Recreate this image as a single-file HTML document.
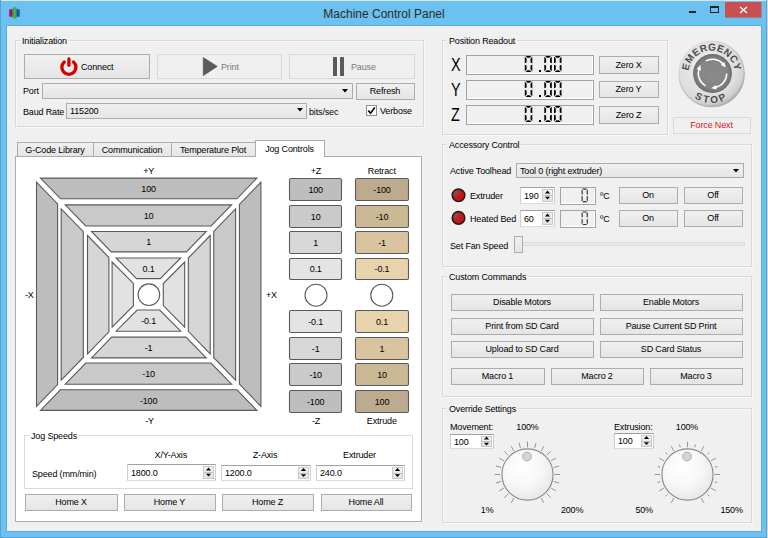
<!DOCTYPE html><html><head><meta charset="utf-8"><style>
*{margin:0;padding:0;box-sizing:border-box}
html,body{width:768px;height:538px;overflow:hidden;background:#6bc1ef;font-family:"Liberation Sans", sans-serif;color:#000}
.t{position:absolute;line-height:0;white-space:nowrap}
.t::before{content:"";}
.btn{position:absolute;border:1px solid #acacac;background:linear-gradient(#f0f0f0,#e5e5e5)}
.btn.dis{border-color:#d9d9d9;background:#f0f0f0}
.grp{position:absolute;border:1px solid #d9d9d9;box-shadow:inset 1px 1px 0 rgba(255,255,255,.55), 1px 1px 0 rgba(255,255,255,.55)}
.gt{background:#f0f0f0}
</style></head><body>
<div style="position:absolute;left:0px;top:0px;width:768px;height:1px;background:#e3e3e3"></div>
<div style="position:absolute;left:0px;top:0px;width:1px;height:538px;background:#5aa0cf"></div>
<div style="position:absolute;left:0px;top:537px;width:768px;height:1px;background:#5aa0cf"></div>
<div style="position:absolute;left:766px;top:0px;width:1px;height:538px;background:#5aa0cf"></div>
<div style="position:absolute;left:767px;top:0px;width:1px;height:538px;background:#d8d8d8"></div>
<div style="position:absolute;left:6px;top:25px;width:756px;height:507px;background:#5eabdc"></div>
<div style="position:absolute;left:7px;top:26px;width:754px;height:505px;background:#f0f0f0"></div>
<svg style="position:absolute;left:0;top:0" width="768" height="25"><defs><linearGradient id="ic1" x1="0" x2="1"><stop offset="0" stop-color="#e0107a"/><stop offset="1" stop-color="#701090"/></linearGradient><linearGradient id="ic3" x1="0" x2="1"><stop offset="0" stop-color="#1030b0"/><stop offset="1" stop-color="#2080e0"/></linearGradient><linearGradient id="ic2" x1="0" x2="1"><stop offset="0" stop-color="#20902a"/><stop offset="0.5" stop-color="#50c040"/><stop offset="1" stop-color="#208a2a"/></linearGradient></defs><rect x="9" y="9" width="3.6" height="8" rx="1.8" fill="url(#ic1)"/><rect x="16.6" y="9" width="3.5" height="8" rx="1.75" fill="url(#ic3)"/><rect x="12.5" y="7" width="4.3" height="12" rx="2.15" fill="url(#ic2)"/><rect x="689" y="11" width="7" height="2" fill="#222"/><rect x="710.5" y="6.5" width="8" height="6" fill="none" stroke="#222" stroke-width="1"/><rect x="710" y="6" width="9" height="2" fill="#222"/><rect x="725" y="2" width="36.5" height="15.6" fill="#c75050"/><path d="M740 7 L747 13 M747 7 L740 13" stroke="#fff" stroke-width="1.4"/></svg>
<div class="t" style="left:284px;width:200px;text-align:center;top:14.2px;font-size:12px;letter-spacing:0px;transform:scaleX(1);transform-origin:100px 0;color:#2b2b2b">Machine Control Panel</div>
<div class="grp" style="left:15px;top:40px;width:409px;height:87px;"></div>
<div class="t" style="left:20px;top:41px;font-size:9px;letter-spacing:-0.15px"><span class="gt" style="padding:0 2px">Initialization</span></div>
<div class="btn" style="left:24px;top:54px;width:126px;height:25px;"></div>
<svg style="position:absolute;left:0;top:0" width="768" height="100"><path d="M64.3 62.0 A7.05 7.05 0 1 0 73.5 62.0" fill="none" stroke="#d00000" stroke-width="3.3" stroke-linecap="round"/><path d="M68.9 58.9 L68.9 65.3" stroke="#d00000" stroke-width="3.3" stroke-linecap="round"/></svg>
<div class="t" style="left:81px;top:66.5px;font-size:9px;letter-spacing:-0.15px;transform:scaleX(1);transform-origin:0 0;">Connect</div>
<div class="btn dis" style="left:157px;top:54px;width:125px;height:25px;"></div>
<svg style="position:absolute;left:200px;top:55px" width="20" height="23"><path d="M3.3 2.6 L17.2 11.4 L3.3 20.6 Z" fill="#5b5b5b" stroke="#5b5b5b" stroke-width="0.8" stroke-linejoin="round"/></svg>
<div class="t" style="left:221px;top:66.5px;font-size:9px;letter-spacing:-0.15px;transform:scaleX(1);transform-origin:0 0;color:#7a7a7a">Print</div>
<div class="btn dis" style="left:289px;top:54px;width:126px;height:25px;"></div>
<div style="position:absolute;left:333px;top:57px;width:4px;height:19px;background:#5b5b5b;border-radius:0.5px"></div>
<div style="position:absolute;left:340px;top:57px;width:4px;height:19px;background:#5b5b5b;border-radius:0.5px"></div>
<div class="t" style="left:351px;top:66.5px;font-size:9px;letter-spacing:-0.15px;transform:scaleX(1);transform-origin:0 0;color:#7a7a7a">Pause</div>
<div class="t" style="left:23px;top:91px;font-size:9px;letter-spacing:-0.15px;transform:scaleX(1);transform-origin:0 0;">Port</div>
<div class="btn" style="left:42px;top:83px;width:311px;height:16px;"></div>
<svg style="position:absolute;left:340px;top:87px" width="10" height="8"><path d="M2 2 L8 2 L5 5.5 Z" fill="#000"/></svg>
<div class="btn" style="left:356px;top:83px;width:59px;height:17px;"></div>
<div class="t" style="left:285.0px;width:200px;text-align:center;top:91.0px;font-size:9px;letter-spacing:-0.15px;transform:scaleX(1);transform-origin:100px 0;">Refresh</div>
<div class="t" style="left:23px;top:111.5px;font-size:9px;letter-spacing:-0.15px;transform:scaleX(1);transform-origin:0 0;">Baud Rate</div>
<div class="btn" style="left:66px;top:103px;width:241px;height:16px;"></div>
<div class="t" style="left:70px;top:111px;font-size:9px;letter-spacing:-0.15px;transform:scaleX(1);transform-origin:0 0;">115200</div>
<svg style="position:absolute;left:295px;top:106px" width="10" height="8"><path d="M2 2 L8 2 L5 5.5 Z" fill="#000"/></svg>
<div class="t" style="left:309px;top:111.5px;font-size:9px;letter-spacing:-0.15px;transform:scaleX(1);transform-origin:0 0;">bits/sec</div>
<div style="position:absolute;left:366px;top:105px;width:11px;height:11px;border:1px solid #8f8f8f;background:#fff"></div>
<svg style="position:absolute;left:366px;top:105px" width="11" height="11"><path d="M2.3 5.6 L4.6 8.2 L8.8 2.4" fill="none" stroke="#000" stroke-width="1.6"/></svg>
<div class="t" style="left:380px;top:110.5px;font-size:9px;letter-spacing:-0.15px;transform:scaleX(1);transform-origin:0 0;">Verbose</div>
<div class="grp" style="left:442px;top:40px;width:226px;height:95px;"></div>
<div class="t" style="left:447px;top:41px;font-size:9px;letter-spacing:-0.15px"><span class="gt" style="padding:0 2px">Position Readout</span></div>
<div class="t" style="left:450.5px;top:64.5px;font-size:18px;letter-spacing:0px;transform:scaleX(0.8);transform-origin:0 0;">X</div>
<div style="position:absolute;left:466px;top:55px;width:128px;height:20px;border:1px solid #a3a3a3;box-shadow:inset -1px -1px 0 #fff;background:#f0f0f0"></div>
<div class="btn" style="left:599px;top:56px;width:60px;height:18px;"></div>
<div class="t" style="left:528.5px;width:200px;text-align:center;top:64.5px;font-size:9px;letter-spacing:-0.15px;transform:scaleX(1);transform-origin:100px 0;">Zero X</div>
<div class="t" style="left:450.5px;top:89.5px;font-size:18px;letter-spacing:0px;transform:scaleX(0.8);transform-origin:0 0;">Y</div>
<div style="position:absolute;left:466px;top:80px;width:128px;height:20px;border:1px solid #a3a3a3;box-shadow:inset -1px -1px 0 #fff;background:#f0f0f0"></div>
<div class="btn" style="left:599px;top:81px;width:60px;height:17px;"></div>
<div class="t" style="left:528.5px;width:200px;text-align:center;top:89.0px;font-size:9px;letter-spacing:-0.15px;transform:scaleX(1);transform-origin:100px 0;">Zero Y</div>
<div class="t" style="left:450.5px;top:114.5px;font-size:18px;letter-spacing:0px;transform:scaleX(0.8);transform-origin:0 0;">Z</div>
<div style="position:absolute;left:466px;top:105px;width:128px;height:20px;border:1px solid #a3a3a3;box-shadow:inset -1px -1px 0 #fff;background:#f0f0f0"></div>
<div class="btn" style="left:599px;top:106px;width:60px;height:18px;"></div>
<div class="t" style="left:528.5px;width:200px;text-align:center;top:114.5px;font-size:9px;letter-spacing:-0.15px;transform:scaleX(1);transform-origin:100px 0;">Zero Z</div>
<svg style="position:absolute;left:0;top:0" width="768" height="538"><g fill="#000"><path d="M525.5999999999999 56 L531.5 56 L529.7 57.8 L527.3999999999999 57.8 Z"/><path d="M525.5999999999999 72 L531.5 72 L529.7 70.2 L527.3999999999999 70.2 Z"/><path d="M524.8 56.8 L526.5999999999999 58.599999999999994 L526.5999999999999 62.6 L524.8 63.2 Z"/><path d="M524.8 71.2 L526.5999999999999 69.4 L526.5999999999999 65.4 L524.8 64.8 Z"/><path d="M532.3 56.8 L530.5 58.599999999999994 L530.5 62.6 L532.3 63.2 Z"/><path d="M532.3 71.2 L530.5 69.4 L530.5 65.4 L532.3 64.8 Z"/><path d="M545.0999999999999 56 L551.0 56 L549.2 57.8 L546.8999999999999 57.8 Z"/><path d="M545.0999999999999 72 L551.0 72 L549.2 70.2 L546.8999999999999 70.2 Z"/><path d="M544.3 56.8 L546.0999999999999 58.599999999999994 L546.0999999999999 62.6 L544.3 63.2 Z"/><path d="M544.3 71.2 L546.0999999999999 69.4 L546.0999999999999 65.4 L544.3 64.8 Z"/><path d="M551.8 56.8 L550.0 58.599999999999994 L550.0 62.6 L551.8 63.2 Z"/><path d="M551.8 71.2 L550.0 69.4 L550.0 65.4 L551.8 64.8 Z"/><path d="M554.8 56 L560.7 56 L558.9000000000001 57.8 L556.5999999999999 57.8 Z"/><path d="M554.8 72 L560.7 72 L558.9000000000001 70.2 L556.5999999999999 70.2 Z"/><path d="M554.0 56.8 L555.8 58.599999999999994 L555.8 62.6 L554.0 63.2 Z"/><path d="M554.0 71.2 L555.8 69.4 L555.8 65.4 L554.0 64.8 Z"/><path d="M561.5 56.8 L559.7 58.599999999999994 L559.7 62.6 L561.5 63.2 Z"/><path d="M561.5 71.2 L559.7 69.4 L559.7 65.4 L561.5 64.8 Z"/><rect x="539" y="70" width="2" height="2"/><path d="M525.5999999999999 81 L531.5 81 L529.7 82.8 L527.3999999999999 82.8 Z"/><path d="M525.5999999999999 97 L531.5 97 L529.7 95.2 L527.3999999999999 95.2 Z"/><path d="M524.8 81.8 L526.5999999999999 83.6 L526.5999999999999 87.6 L524.8 88.2 Z"/><path d="M524.8 96.2 L526.5999999999999 94.4 L526.5999999999999 90.4 L524.8 89.8 Z"/><path d="M532.3 81.8 L530.5 83.6 L530.5 87.6 L532.3 88.2 Z"/><path d="M532.3 96.2 L530.5 94.4 L530.5 90.4 L532.3 89.8 Z"/><path d="M545.0999999999999 81 L551.0 81 L549.2 82.8 L546.8999999999999 82.8 Z"/><path d="M545.0999999999999 97 L551.0 97 L549.2 95.2 L546.8999999999999 95.2 Z"/><path d="M544.3 81.8 L546.0999999999999 83.6 L546.0999999999999 87.6 L544.3 88.2 Z"/><path d="M544.3 96.2 L546.0999999999999 94.4 L546.0999999999999 90.4 L544.3 89.8 Z"/><path d="M551.8 81.8 L550.0 83.6 L550.0 87.6 L551.8 88.2 Z"/><path d="M551.8 96.2 L550.0 94.4 L550.0 90.4 L551.8 89.8 Z"/><path d="M554.8 81 L560.7 81 L558.9000000000001 82.8 L556.5999999999999 82.8 Z"/><path d="M554.8 97 L560.7 97 L558.9000000000001 95.2 L556.5999999999999 95.2 Z"/><path d="M554.0 81.8 L555.8 83.6 L555.8 87.6 L554.0 88.2 Z"/><path d="M554.0 96.2 L555.8 94.4 L555.8 90.4 L554.0 89.8 Z"/><path d="M561.5 81.8 L559.7 83.6 L559.7 87.6 L561.5 88.2 Z"/><path d="M561.5 96.2 L559.7 94.4 L559.7 90.4 L561.5 89.8 Z"/><rect x="539" y="95" width="2" height="2"/><path d="M525.5999999999999 106 L531.5 106 L529.7 107.8 L527.3999999999999 107.8 Z"/><path d="M525.5999999999999 122 L531.5 122 L529.7 120.2 L527.3999999999999 120.2 Z"/><path d="M524.8 106.8 L526.5999999999999 108.6 L526.5999999999999 112.6 L524.8 113.2 Z"/><path d="M524.8 121.2 L526.5999999999999 119.4 L526.5999999999999 115.4 L524.8 114.8 Z"/><path d="M532.3 106.8 L530.5 108.6 L530.5 112.6 L532.3 113.2 Z"/><path d="M532.3 121.2 L530.5 119.4 L530.5 115.4 L532.3 114.8 Z"/><path d="M545.0999999999999 106 L551.0 106 L549.2 107.8 L546.8999999999999 107.8 Z"/><path d="M545.0999999999999 122 L551.0 122 L549.2 120.2 L546.8999999999999 120.2 Z"/><path d="M544.3 106.8 L546.0999999999999 108.6 L546.0999999999999 112.6 L544.3 113.2 Z"/><path d="M544.3 121.2 L546.0999999999999 119.4 L546.0999999999999 115.4 L544.3 114.8 Z"/><path d="M551.8 106.8 L550.0 108.6 L550.0 112.6 L551.8 113.2 Z"/><path d="M551.8 121.2 L550.0 119.4 L550.0 115.4 L551.8 114.8 Z"/><path d="M554.8 106 L560.7 106 L558.9000000000001 107.8 L556.5999999999999 107.8 Z"/><path d="M554.8 122 L560.7 122 L558.9000000000001 120.2 L556.5999999999999 120.2 Z"/><path d="M554.0 106.8 L555.8 108.6 L555.8 112.6 L554.0 113.2 Z"/><path d="M554.0 121.2 L555.8 119.4 L555.8 115.4 L554.0 114.8 Z"/><path d="M561.5 106.8 L559.7 108.6 L559.7 112.6 L561.5 113.2 Z"/><path d="M561.5 121.2 L559.7 119.4 L559.7 115.4 L561.5 114.8 Z"/><rect x="539" y="120" width="2" height="2"/></g></svg>
<svg style="position:absolute;left:672px;top:34px" width="80" height="80" viewBox="0 0 80 80">
<defs>
<radialGradient id="eo" cx="0.42" cy="0.38" r="0.62"><stop offset="0" stop-color="#ececec"/><stop offset="0.75" stop-color="#dedede"/><stop offset="0.93" stop-color="#d2d2d2"/><stop offset="1" stop-color="#bdbdbd"/></radialGradient>
<radialGradient id="ei" cx="0.5" cy="0.5" r="0.5"><stop offset="0" stop-color="#8a8a8a"/><stop offset="0.75" stop-color="#858585"/><stop offset="0.92" stop-color="#767676"/><stop offset="1" stop-color="#6a6a6a"/></radialGradient>
<path id="arcT" d="M16.300000000000022 39.900000000000006 A23.3 23.3 0 0 1 62.90000000000002 39.900000000000006"/>
<path id="arcB" d="M10.300000000000022 39.900000000000006 A29.3 29.3 0 0 0 68.90000000000002 39.900000000000006"/>
</defs>
<linearGradient id="erim" x1="0.2" y1="0.1" x2="0.8" y2="0.95"><stop offset="0" stop-color="#e0e0e0"/><stop offset="1" stop-color="#a8a8a8"/></linearGradient>
<circle cx="39.60000000000002" cy="39.900000000000006" r="32.6" fill="url(#eo)" stroke="url(#erim)" stroke-width="1.4"/>
<circle cx="40.5" cy="39.5" r="19.4" fill="url(#ei)"/>
<path d="M33.83 26.96 A14.2 14.2 0 0 1 51.38 30.37" fill="none" stroke="#fff" stroke-width="1.5"/><path d="M53.81 33.27 L52.34 27.92 L48.80 30.89 Z" fill="#fff"/><path d="M33.40 51.80 A14.2 14.2 0 0 1 27.16 34.64" fill="none" stroke="#fff" stroke-width="1.5"/><path d="M28.45 31.09 L24.55 35.04 L28.90 36.62 Z" fill="#fff"/><path d="M54.70 39.50 A14.2 14.2 0 0 1 42.97 53.48" fill="none" stroke="#fff" stroke-width="1.5"/><path d="M39.24 54.14 L44.61 55.54 L43.81 50.99 Z" fill="#fff"/><text font-family="Liberation Sans" font-weight="bold" font-size="10" fill="#4c4c4c" letter-spacing="0.25"><textPath href="#arcT" startOffset="50%" text-anchor="middle">EMERGENCY</textPath></text>
<text font-family="Liberation Sans" font-weight="bold" font-size="10" fill="#4c4c4c" letter-spacing="2.4"><textPath href="#arcB" startOffset="50%" text-anchor="middle">STOP</textPath></text>
</svg>
<div class="btn dis" style="left:673px;top:117px;width:78px;height:17px;"></div>
<div class="t" style="left:611.5px;width:200px;text-align:center;top:125.0px;font-size:9px;letter-spacing:-0.15px;transform:scaleX(1);transform-origin:100px 0;color:#dc1028">Force Next</div>
<div style="position:absolute;left:15px;top:156px;width:407px;height:366px;border:1px solid #acacac;background:#fff"></div>
<div style="position:absolute;left:17px;top:142px;width:77px;height:15px;border:1px solid #acacac;background:linear-gradient(#f0f0f0,#e5e5e5)"></div>
<div class="t" style="left:-45.0px;width:200px;text-align:center;top:149.5px;font-size:9px;letter-spacing:-0.15px;transform:scaleX(1);transform-origin:100px 0;">G-Code Library</div>
<div style="position:absolute;left:93px;top:142px;width:79px;height:15px;border:1px solid #acacac;background:linear-gradient(#f0f0f0,#e5e5e5)"></div>
<div class="t" style="left:32.0px;width:200px;text-align:center;top:149.5px;font-size:9px;letter-spacing:-0.15px;transform:scaleX(1);transform-origin:100px 0;">Communication</div>
<div style="position:absolute;left:171px;top:142px;width:85px;height:15px;border:1px solid #acacac;background:linear-gradient(#f0f0f0,#e5e5e5)"></div>
<div class="t" style="left:113.0px;width:200px;text-align:center;top:149.5px;font-size:9px;letter-spacing:-0.15px;transform:scaleX(1);transform-origin:100px 0;">Temperature Plot</div>
<div style="position:absolute;left:255px;top:140px;width:70px;height:17px;border:1px solid #acacac;border-bottom:none;background:#fff"></div>
<div class="t" style="left:189.5px;width:200px;text-align:center;top:149px;font-size:9px;letter-spacing:-0.15px;transform:scaleX(1);transform-origin:100px 0;">Jog Controls</div>
<svg style="position:absolute;left:0;top:0" width="768" height="538"><polygon points="40.50,178.10 256.90,178.10 236.90,198.80 60.50,198.80" fill="#bdbdbd" stroke="#5a5a5a" stroke-width="1.1" stroke-linejoin="miter"/><polygon points="40.50,410.40 256.90,410.40 237.00,389.80 60.40,389.80" fill="#bdbdbd" stroke="#5a5a5a" stroke-width="1.1" stroke-linejoin="miter"/><polygon points="36.50,182.10 57.60,203.94 57.60,384.56 36.50,406.40" fill="#bdbdbd" stroke="#5a5a5a" stroke-width="1.1" stroke-linejoin="miter"/><polygon points="260.90,182.10 239.40,204.36 239.40,384.14 260.90,406.40" fill="#bdbdbd" stroke="#5a5a5a" stroke-width="1.1" stroke-linejoin="miter"/><polygon points="65.20,204.90 231.60,204.90 211.08,226.00 85.72,226.00" fill="#c9c9c9" stroke="#5a5a5a" stroke-width="1.1" stroke-linejoin="miter"/><polygon points="65.20,384.20 231.60,384.20 210.98,363.00 85.82,363.00" fill="#c9c9c9" stroke="#5a5a5a" stroke-width="1.1" stroke-linejoin="miter"/><polygon points="61.20,208.90 83.30,231.62 83.30,357.48 61.20,380.20" fill="#c9c9c9" stroke="#5a5a5a" stroke-width="1.1" stroke-linejoin="miter"/><polygon points="235.60,208.90 213.75,231.36 213.75,357.74 235.60,380.20" fill="#c9c9c9" stroke="#5a5a5a" stroke-width="1.1" stroke-linejoin="miter"/><polygon points="91.50,231.50 206.20,231.50 186.40,251.90 111.30,251.90" fill="#d6d6d6" stroke="#5a5a5a" stroke-width="1.1" stroke-linejoin="miter"/><polygon points="91.50,357.90 206.20,357.90 186.01,337.10 111.69,337.10" fill="#d6d6d6" stroke="#5a5a5a" stroke-width="1.1" stroke-linejoin="miter"/><polygon points="87.50,235.50 108.90,257.55 108.90,331.85 87.50,353.90" fill="#d6d6d6" stroke="#5a5a5a" stroke-width="1.1" stroke-linejoin="miter"/><polygon points="210.20,235.50 188.30,258.06 188.30,331.34 210.20,353.90" fill="#d6d6d6" stroke="#5a5a5a" stroke-width="1.1" stroke-linejoin="miter"/><polygon points="116.10,258.00 180.70,258.00 160.27,278.60 136.53,278.60" fill="#e2e2e2" stroke="#5a5a5a" stroke-width="1.1" stroke-linejoin="miter"/><polygon points="116.10,331.20 180.70,331.20 159.67,310.00 137.13,310.00" fill="#e2e2e2" stroke="#5a5a5a" stroke-width="1.1" stroke-linejoin="miter"/><polygon points="112.10,262.00 133.40,283.48 133.40,305.72 112.10,327.20" fill="#e2e2e2" stroke="#5a5a5a" stroke-width="1.1" stroke-linejoin="miter"/><polygon points="184.70,262.00 163.30,283.58 163.30,305.62 184.70,327.20" fill="#e2e2e2" stroke="#5a5a5a" stroke-width="1.1" stroke-linejoin="miter"/><circle cx="148.9" cy="294.65" r="10.8" fill="#fff" stroke="#5a5a5a" stroke-width="1.1"/><rect x="289.5" y="178.5" width="52" height="22" rx="1.5" fill="#bebebe" stroke="#5a5a5a" stroke-width="1.1"/><rect x="355.5" y="178.5" width="53" height="22" rx="1.5" fill="#bcab8f" stroke="#5a5a5a" stroke-width="1.1"/><rect x="289.5" y="205.5" width="52" height="22" rx="1.5" fill="#cacaca" stroke="#5a5a5a" stroke-width="1.1"/><rect x="355.5" y="205.5" width="53" height="22" rx="1.5" fill="#cbb895" stroke="#5a5a5a" stroke-width="1.1"/><rect x="289.5" y="231.5" width="52" height="22" rx="1.5" fill="#d7d7d7" stroke="#5a5a5a" stroke-width="1.1"/><rect x="355.5" y="231.5" width="53" height="22" rx="1.5" fill="#dac49f" stroke="#5a5a5a" stroke-width="1.1"/><rect x="289.5" y="258.5" width="52" height="21" rx="1.5" fill="#e4e4e4" stroke="#5a5a5a" stroke-width="1.1"/><rect x="355.5" y="258.5" width="53" height="21" rx="1.5" fill="#e8d3ad" stroke="#5a5a5a" stroke-width="1.1"/><rect x="289.5" y="310.5" width="52" height="22" rx="1.5" fill="#e4e4e4" stroke="#5a5a5a" stroke-width="1.1"/><rect x="355.5" y="310.5" width="53" height="22" rx="1.5" fill="#e8d3ad" stroke="#5a5a5a" stroke-width="1.1"/><rect x="289.5" y="337.5" width="52" height="22" rx="1.5" fill="#d7d7d7" stroke="#5a5a5a" stroke-width="1.1"/><rect x="355.5" y="337.5" width="53" height="22" rx="1.5" fill="#dac49f" stroke="#5a5a5a" stroke-width="1.1"/><rect x="289.5" y="363.5" width="52" height="22" rx="1.5" fill="#cacaca" stroke="#5a5a5a" stroke-width="1.1"/><rect x="355.5" y="363.5" width="53" height="22" rx="1.5" fill="#cbb895" stroke="#5a5a5a" stroke-width="1.1"/><rect x="289.5" y="390.5" width="52" height="22" rx="1.5" fill="#bebebe" stroke="#5a5a5a" stroke-width="1.1"/><rect x="355.5" y="390.5" width="53" height="22" rx="1.5" fill="#bcab8f" stroke="#5a5a5a" stroke-width="1.1"/><circle cx="316" cy="295.2" r="11" fill="#fff" stroke="#5a5a5a" stroke-width="1.1"/><circle cx="381.8" cy="295.2" r="11" fill="#fff" stroke="#5a5a5a" stroke-width="1.1"/></svg>
<div class="t" style="left:48.69999999999999px;width:200px;text-align:center;top:170.8px;font-size:9px;letter-spacing:-0.15px;transform:scaleX(1);transform-origin:100px 0;">+Y</div>
<div class="t" style="left:49.5px;width:200px;text-align:center;top:420.5px;font-size:9px;letter-spacing:-0.15px;transform:scaleX(1);transform-origin:100px 0;">-Y</div>
<div class="t" style="left:25px;top:295.3px;font-size:9px;letter-spacing:-0.15px;transform:scaleX(1);transform-origin:0 0;">-X</div>
<div class="t" style="left:266px;top:295.3px;font-size:9px;letter-spacing:-0.15px;transform:scaleX(1);transform-origin:0 0;">+X</div>
<div class="t" style="left:48.599999999999994px;width:200px;text-align:center;top:189.2px;font-size:9px;letter-spacing:-0.15px;transform:scaleX(1);transform-origin:100px 0;">100</div>
<div class="t" style="left:48.599999999999994px;width:200px;text-align:center;top:215.9px;font-size:9px;letter-spacing:-0.15px;transform:scaleX(1);transform-origin:100px 0;">10</div>
<div class="t" style="left:48.599999999999994px;width:200px;text-align:center;top:242px;font-size:9px;letter-spacing:-0.15px;transform:scaleX(1);transform-origin:100px 0;">1</div>
<div class="t" style="left:48.599999999999994px;width:200px;text-align:center;top:268.6px;font-size:9px;letter-spacing:-0.15px;transform:scaleX(1);transform-origin:100px 0;">0.1</div>
<div class="t" style="left:48.599999999999994px;width:200px;text-align:center;top:321.2px;font-size:9px;letter-spacing:-0.15px;transform:scaleX(1);transform-origin:100px 0;">-0.1</div>
<div class="t" style="left:48.599999999999994px;width:200px;text-align:center;top:347.8px;font-size:9px;letter-spacing:-0.15px;transform:scaleX(1);transform-origin:100px 0;">-1</div>
<div class="t" style="left:48.599999999999994px;width:200px;text-align:center;top:374.2px;font-size:9px;letter-spacing:-0.15px;transform:scaleX(1);transform-origin:100px 0;">-10</div>
<div class="t" style="left:48.599999999999994px;width:200px;text-align:center;top:400.6px;font-size:9px;letter-spacing:-0.15px;transform:scaleX(1);transform-origin:100px 0;">-100</div>
<div class="t" style="left:216px;width:200px;text-align:center;top:171px;font-size:9px;letter-spacing:-0.15px;transform:scaleX(1);transform-origin:100px 0;">+Z</div>
<div class="t" style="left:281.8px;width:200px;text-align:center;top:171px;font-size:9px;letter-spacing:-0.15px;transform:scaleX(1);transform-origin:100px 0;">Retract</div>
<div class="t" style="left:216px;width:200px;text-align:center;top:420.5px;font-size:9px;letter-spacing:-0.15px;transform:scaleX(1);transform-origin:100px 0;">-Z</div>
<div class="t" style="left:281.8px;width:200px;text-align:center;top:420.5px;font-size:9px;letter-spacing:-0.15px;transform:scaleX(1);transform-origin:100px 0;">Extrude</div>
<div class="t" style="left:215.7px;width:200px;text-align:center;top:189.8px;font-size:9px;letter-spacing:-0.15px;transform:scaleX(1);transform-origin:100px 0;">100</div>
<div class="t" style="left:282px;width:200px;text-align:center;top:189.8px;font-size:9px;letter-spacing:-0.15px;transform:scaleX(1);transform-origin:100px 0;">-100</div>
<div class="t" style="left:215.7px;width:200px;text-align:center;top:216.8px;font-size:9px;letter-spacing:-0.15px;transform:scaleX(1);transform-origin:100px 0;">10</div>
<div class="t" style="left:282px;width:200px;text-align:center;top:216.8px;font-size:9px;letter-spacing:-0.15px;transform:scaleX(1);transform-origin:100px 0;">-10</div>
<div class="t" style="left:215.7px;width:200px;text-align:center;top:242.8px;font-size:9px;letter-spacing:-0.15px;transform:scaleX(1);transform-origin:100px 0;">1</div>
<div class="t" style="left:282px;width:200px;text-align:center;top:242.8px;font-size:9px;letter-spacing:-0.15px;transform:scaleX(1);transform-origin:100px 0;">-1</div>
<div class="t" style="left:215.7px;width:200px;text-align:center;top:269.3px;font-size:9px;letter-spacing:-0.15px;transform:scaleX(1);transform-origin:100px 0;">0.1</div>
<div class="t" style="left:282px;width:200px;text-align:center;top:269.3px;font-size:9px;letter-spacing:-0.15px;transform:scaleX(1);transform-origin:100px 0;">-0.1</div>
<div class="t" style="left:215.7px;width:200px;text-align:center;top:321.8px;font-size:9px;letter-spacing:-0.15px;transform:scaleX(1);transform-origin:100px 0;">-0.1</div>
<div class="t" style="left:282px;width:200px;text-align:center;top:321.8px;font-size:9px;letter-spacing:-0.15px;transform:scaleX(1);transform-origin:100px 0;">0.1</div>
<div class="t" style="left:215.7px;width:200px;text-align:center;top:348.8px;font-size:9px;letter-spacing:-0.15px;transform:scaleX(1);transform-origin:100px 0;">-1</div>
<div class="t" style="left:282px;width:200px;text-align:center;top:348.8px;font-size:9px;letter-spacing:-0.15px;transform:scaleX(1);transform-origin:100px 0;">1</div>
<div class="t" style="left:215.7px;width:200px;text-align:center;top:374.8px;font-size:9px;letter-spacing:-0.15px;transform:scaleX(1);transform-origin:100px 0;">-10</div>
<div class="t" style="left:282px;width:200px;text-align:center;top:374.8px;font-size:9px;letter-spacing:-0.15px;transform:scaleX(1);transform-origin:100px 0;">10</div>
<div class="t" style="left:215.7px;width:200px;text-align:center;top:401.8px;font-size:9px;letter-spacing:-0.15px;transform:scaleX(1);transform-origin:100px 0;">-100</div>
<div class="t" style="left:282px;width:200px;text-align:center;top:401.8px;font-size:9px;letter-spacing:-0.15px;transform:scaleX(1);transform-origin:100px 0;">100</div>
<div class="grp" style="left:24px;top:435px;width:389px;height:54px;"></div>
<div class="t" style="left:29px;top:436px;font-size:9px;letter-spacing:-0.15px"><span class="gt" style="background:#fff;padding:0 2px">Jog Speeds</span></div>
<div class="t" style="left:70.80000000000001px;width:200px;text-align:center;top:454.5px;font-size:9px;letter-spacing:-0.15px;transform:scaleX(1);transform-origin:100px 0;">X/Y-Axis</div>
<div class="t" style="left:165px;width:200px;text-align:center;top:454.5px;font-size:9px;letter-spacing:-0.15px;transform:scaleX(1);transform-origin:100px 0;">Z-Axis</div>
<div class="t" style="left:259.5px;width:200px;text-align:center;top:454.5px;font-size:9px;letter-spacing:-0.15px;transform:scaleX(1);transform-origin:100px 0;">Extruder</div>
<div class="t" style="left:32px;top:473.5px;font-size:9px;letter-spacing:-0.15px;transform:scaleX(1);transform-origin:0 0;">Speed (mm/min)</div>
<div style="position:absolute;left:127px;top:464px;width:89px;height:17px;border:1px solid #abadb3;border-top-color:#a0a0a0;border-left-color:#cfcfcf;border-right-color:#cfcfcf;border-bottom-color:#dcdcdc;background:#fff"></div>
<div class="t" style="left:131px;top:472.5px;font-size:9px;letter-spacing:-0.15px;transform:scaleX(1);transform-origin:0 0;">1800.0</div>
<div style="position:absolute;left:203px;top:466px;width:11px;height:13px;border:1px solid #c9c9c9;background:linear-gradient(#f2f2f2,#e2e2e2)"></div>
<div style="position:absolute;left:204px;top:472.0px;width:9px;height:1px;background:#c4c4c4"></div>
<svg style="position:absolute;left:0;top:0;overflow:visible" width="1" height="1"><path d="M205.9 470.4 L211.1 470.4 L208.5 467.6 Z M205.9 473.8 L211.1 473.8 L208.5 476.6 Z" fill="#000"/></svg>
<div style="position:absolute;left:221px;top:465px;width:90px;height:16px;border:1px solid #abadb3;border-top-color:#a0a0a0;border-left-color:#cfcfcf;border-right-color:#cfcfcf;border-bottom-color:#dcdcdc;background:#fff"></div>
<div class="t" style="left:225px;top:473.0px;font-size:9px;letter-spacing:-0.15px;transform:scaleX(1);transform-origin:0 0;">1200.0</div>
<div style="position:absolute;left:298px;top:467px;width:11px;height:12px;border:1px solid #c9c9c9;background:linear-gradient(#f2f2f2,#e2e2e2)"></div>
<div style="position:absolute;left:299px;top:472.5px;width:9px;height:1px;background:#c4c4c4"></div>
<svg style="position:absolute;left:0;top:0;overflow:visible" width="1" height="1"><path d="M300.9 470.9 L306.1 470.9 L303.5 468.1 Z M300.9 474.3 L306.1 474.3 L303.5 477.1 Z" fill="#000"/></svg>
<div style="position:absolute;left:316px;top:465px;width:89px;height:16px;border:1px solid #abadb3;border-top-color:#a0a0a0;border-left-color:#cfcfcf;border-right-color:#cfcfcf;border-bottom-color:#dcdcdc;background:#fff"></div>
<div class="t" style="left:320px;top:473.0px;font-size:9px;letter-spacing:-0.15px;transform:scaleX(1);transform-origin:0 0;">240.0</div>
<div style="position:absolute;left:392px;top:467px;width:11px;height:12px;border:1px solid #c9c9c9;background:linear-gradient(#f2f2f2,#e2e2e2)"></div>
<div style="position:absolute;left:393px;top:472.5px;width:9px;height:1px;background:#c4c4c4"></div>
<svg style="position:absolute;left:0;top:0;overflow:visible" width="1" height="1"><path d="M394.9 470.9 L400.1 470.9 L397.5 468.1 Z M394.9 474.3 L400.1 474.3 L397.5 477.1 Z" fill="#000"/></svg>
<div class="btn" style="left:25px;top:494px;width:93px;height:17px;"></div>
<div class="t" style="left:-29.0px;width:200px;text-align:center;top:502.0px;font-size:9px;letter-spacing:-0.15px;transform:scaleX(1);transform-origin:100px 0;">Home X</div>
<div class="btn" style="left:124px;top:494px;width:92px;height:17px;"></div>
<div class="t" style="left:69.5px;width:200px;text-align:center;top:502.0px;font-size:9px;letter-spacing:-0.15px;transform:scaleX(1);transform-origin:100px 0;">Home Y</div>
<div class="btn" style="left:222px;top:494px;width:92px;height:17px;"></div>
<div class="t" style="left:167.5px;width:200px;text-align:center;top:502.0px;font-size:9px;letter-spacing:-0.15px;transform:scaleX(1);transform-origin:100px 0;">Home Z</div>
<div class="btn" style="left:321px;top:494px;width:91px;height:17px;"></div>
<div class="t" style="left:266.0px;width:200px;text-align:center;top:502.0px;font-size:9px;letter-spacing:-0.15px;transform:scaleX(1);transform-origin:100px 0;">Home All</div>
<div class="grp" style="left:442px;top:144px;width:310px;height:123px;"></div>
<div class="t" style="left:447px;top:145px;font-size:9px;letter-spacing:-0.15px"><span class="gt" style="padding:0 2px">Accessory Control</span></div>
<div class="t" style="left:450px;top:171px;font-size:9px;letter-spacing:-0.15px;transform:scaleX(1);transform-origin:0 0;">Active Toolhead</div>
<div class="btn" style="left:516px;top:163px;width:228px;height:15px;"></div>
<div class="t" style="left:520px;top:170.5px;font-size:9px;letter-spacing:-0.15px;transform:scaleX(1);transform-origin:0 0;">Tool 0 (right extruder)</div>
<svg style="position:absolute;left:731px;top:167px" width="10" height="8"><path d="M2 2 L8 2 L5 5.5 Z" fill="#000"/></svg>
<svg style="position:absolute;left:0;top:0" width="768" height="538"><defs>
<radialGradient id="led" cx="0.3" cy="0.3" r="0.75"><stop offset="0" stop-color="#8a5050"/><stop offset="0.55" stop-color="#c01818"/><stop offset="1" stop-color="#d40c0c"/></radialGradient></defs>
<circle cx="458.5" cy="195.2" r="6.3" fill="url(#led)" stroke="#1e1e1e" stroke-width="1.5"/>
<circle cx="458.5" cy="217.9" r="6.3" fill="url(#led)" stroke="#1e1e1e" stroke-width="1.5"/>
</svg>
<div class="t" style="left:470px;top:195.5px;font-size:9px;letter-spacing:-0.15px;transform:scaleX(1);transform-origin:0 0;">Extruder</div>
<div class="t" style="left:470px;top:218.5px;font-size:9px;letter-spacing:-0.15px;transform:scaleX(1);transform-origin:0 0;">Heated Bed</div>
<div style="position:absolute;left:520px;top:187px;width:35px;height:17px;border:1px solid #abadb3;border-top-color:#a0a0a0;border-left-color:#cfcfcf;border-right-color:#cfcfcf;border-bottom-color:#dcdcdc;background:#fff"></div>
<div class="t" style="left:524px;top:195.5px;font-size:9px;letter-spacing:-0.15px;transform:scaleX(1);transform-origin:0 0;">190</div>
<div style="position:absolute;left:542px;top:189px;width:11px;height:13px;border:1px solid #c9c9c9;background:linear-gradient(#f2f2f2,#e2e2e2)"></div>
<div style="position:absolute;left:543px;top:195.0px;width:9px;height:1px;background:#c4c4c4"></div>
<svg style="position:absolute;left:0;top:0;overflow:visible" width="1" height="1"><path d="M544.9 193.4 L550.1 193.4 L547.5 190.6 Z M544.9 196.8 L550.1 196.8 L547.5 199.6 Z" fill="#000"/></svg>
<div style="position:absolute;left:520px;top:210px;width:35px;height:17px;border:1px solid #abadb3;border-top-color:#a0a0a0;border-left-color:#cfcfcf;border-right-color:#cfcfcf;border-bottom-color:#dcdcdc;background:#fff"></div>
<div class="t" style="left:524px;top:218.5px;font-size:9px;letter-spacing:-0.15px;transform:scaleX(1);transform-origin:0 0;">60</div>
<div style="position:absolute;left:542px;top:212px;width:11px;height:13px;border:1px solid #c9c9c9;background:linear-gradient(#f2f2f2,#e2e2e2)"></div>
<div style="position:absolute;left:543px;top:218.0px;width:9px;height:1px;background:#c4c4c4"></div>
<svg style="position:absolute;left:0;top:0;overflow:visible" width="1" height="1"><path d="M544.9 216.4 L550.1 216.4 L547.5 213.6 Z M544.9 219.8 L550.1 219.8 L547.5 222.6 Z" fill="#000"/></svg>
<div style="position:absolute;left:560px;top:187px;width:36px;height:18px;border:1px solid #a3a3a3;box-shadow:inset -1px -1px 0 #fff;background:#f0f0f0"></div>
<div class="t" style="left:600px;top:195.5px;font-size:9px;letter-spacing:-0.15px;transform:scaleX(1);transform-origin:0 0;">&ordm;C</div>
<div class="btn" style="left:619px;top:187px;width:59px;height:17px;"></div>
<div class="t" style="left:548.0px;width:200px;text-align:center;top:195.0px;font-size:9px;letter-spacing:-0.15px;transform:scaleX(1);transform-origin:100px 0;">On</div>
<div class="btn" style="left:684px;top:187px;width:59px;height:17px;"></div>
<div class="t" style="left:613.0px;width:200px;text-align:center;top:195.0px;font-size:9px;letter-spacing:-0.15px;transform:scaleX(1);transform-origin:100px 0;">Off</div>
<div style="position:absolute;left:560px;top:210px;width:36px;height:18px;border:1px solid #a3a3a3;box-shadow:inset -1px -1px 0 #fff;background:#f0f0f0"></div>
<div class="t" style="left:600px;top:218.5px;font-size:9px;letter-spacing:-0.15px;transform:scaleX(1);transform-origin:0 0;">&ordm;C</div>
<div class="btn" style="left:619px;top:210px;width:59px;height:17px;"></div>
<div class="t" style="left:548.0px;width:200px;text-align:center;top:218.0px;font-size:9px;letter-spacing:-0.15px;transform:scaleX(1);transform-origin:100px 0;">On</div>
<div class="btn" style="left:684px;top:210px;width:59px;height:17px;"></div>
<div class="t" style="left:613.0px;width:200px;text-align:center;top:218.0px;font-size:9px;letter-spacing:-0.15px;transform:scaleX(1);transform-origin:100px 0;">Off</div>
<svg style="position:absolute;left:0;top:0" width="768" height="538"><g fill="#2a2a2a"><path d="M582.3000000000001 188.6 L587.1 188.6 L586.0 189.7 L583.4000000000001 189.7 Z"/><path d="M582.3000000000001 202.2 L587.1 202.2 L586.0 201.1 L583.4000000000001 201.1 Z"/><path d="M581.6 189.29999999999998 L582.7 190.39999999999998 L582.7 194.45000000000002 L581.6 194.70000000000002 Z"/><path d="M581.6 201.5 L582.7 200.4 L582.7 196.35 L581.6 196.1 Z"/><path d="M587.8000000000001 189.29999999999998 L586.7 190.39999999999998 L586.7 194.45000000000002 L587.8000000000001 194.70000000000002 Z"/><path d="M587.8000000000001 201.5 L586.7 200.4 L586.7 196.35 L587.8000000000001 196.1 Z"/><path d="M582.3000000000001 211.4 L587.1 211.4 L586.0 212.5 L583.4000000000001 212.5 Z"/><path d="M582.3000000000001 225.0 L587.1 225.0 L586.0 223.9 L583.4000000000001 223.9 Z"/><path d="M581.6 212.1 L582.7 213.2 L582.7 217.25000000000003 L581.6 217.50000000000003 Z"/><path d="M581.6 224.3 L582.7 223.20000000000002 L582.7 219.15 L581.6 218.9 Z"/><path d="M587.8000000000001 212.1 L586.7 213.2 L586.7 217.25000000000003 L587.8000000000001 217.50000000000003 Z"/><path d="M587.8000000000001 224.3 L586.7 223.20000000000002 L586.7 219.15 L587.8000000000001 218.9 Z"/></g></svg>
<div class="t" style="left:450px;top:245.5px;font-size:9px;letter-spacing:-0.15px;transform:scaleX(1);transform-origin:0 0;">Set Fan Speed</div>
<div style="position:absolute;left:523px;top:242px;width:222px;height:4px;border:1px solid #dcdcdc;background:#e7e7e7"></div>
<div style="position:absolute;left:514px;top:236px;width:9px;height:17px;border:1px solid #acacac;background:linear-gradient(#f0f0f0,#e5e5e5)"></div>
<div class="grp" style="left:442px;top:276px;width:310px;height:121px;"></div>
<div class="t" style="left:447px;top:277px;font-size:9px;letter-spacing:-0.15px"><span class="gt" style="padding:0 2px">Custom Commands</span></div>
<div class="btn" style="left:451px;top:294px;width:143px;height:17px;"></div>
<div class="t" style="left:422.0px;width:200px;text-align:center;top:302.0px;font-size:9px;letter-spacing:-0.15px;transform:scaleX(1);transform-origin:100px 0;">Disable Motors</div>
<div class="btn" style="left:600px;top:294px;width:143px;height:17px;"></div>
<div class="t" style="left:571.0px;width:200px;text-align:center;top:302.0px;font-size:9px;letter-spacing:-0.15px;transform:scaleX(1);transform-origin:100px 0;">Enable Motors</div>
<div class="btn" style="left:451px;top:318px;width:143px;height:17px;"></div>
<div class="t" style="left:422.0px;width:200px;text-align:center;top:326.0px;font-size:9px;letter-spacing:-0.15px;transform:scaleX(1);transform-origin:100px 0;">Print from SD Card</div>
<div class="btn" style="left:600px;top:318px;width:143px;height:17px;"></div>
<div class="t" style="left:571.0px;width:200px;text-align:center;top:326.0px;font-size:9px;letter-spacing:-0.15px;transform:scaleX(1);transform-origin:100px 0;">Pause Current SD Print</div>
<div class="btn" style="left:451px;top:341px;width:143px;height:17px;"></div>
<div class="t" style="left:422.0px;width:200px;text-align:center;top:349.0px;font-size:9px;letter-spacing:-0.15px;transform:scaleX(1);transform-origin:100px 0;">Upload to SD Card</div>
<div class="btn" style="left:600px;top:341px;width:143px;height:17px;"></div>
<div class="t" style="left:571.0px;width:200px;text-align:center;top:349.0px;font-size:9px;letter-spacing:-0.15px;transform:scaleX(1);transform-origin:100px 0;">SD Card Status</div>
<div class="btn" style="left:451px;top:368px;width:94px;height:17px;"></div>
<div class="t" style="left:397.5px;width:200px;text-align:center;top:376.0px;font-size:9px;letter-spacing:-0.15px;transform:scaleX(1);transform-origin:100px 0;">Macro 1</div>
<div class="btn" style="left:551px;top:368px;width:93px;height:17px;"></div>
<div class="t" style="left:497.0px;width:200px;text-align:center;top:376.0px;font-size:9px;letter-spacing:-0.15px;transform:scaleX(1);transform-origin:100px 0;">Macro 2</div>
<div class="btn" style="left:650px;top:368px;width:93px;height:17px;"></div>
<div class="t" style="left:596.0px;width:200px;text-align:center;top:376.0px;font-size:9px;letter-spacing:-0.15px;transform:scaleX(1);transform-origin:100px 0;">Macro 3</div>
<div class="grp" style="left:442px;top:408px;width:310px;height:115px;"></div>
<div class="t" style="left:447px;top:409px;font-size:9px;letter-spacing:-0.15px"><span class="gt" style="padding:0 2px">Override Settings</span></div>
<div class="t" style="left:450px;top:427px;font-size:9px;letter-spacing:-0.15px;transform:scaleX(1);transform-origin:0 0;">Movement:</div>
<div class="t" style="left:614px;top:427px;font-size:9px;letter-spacing:-0.15px;transform:scaleX(1);transform-origin:0 0;">Extrusion:</div>
<div class="t" style="left:427.5px;width:200px;text-align:center;top:427px;font-size:9px;letter-spacing:-0.15px;transform:scaleX(1);transform-origin:100px 0;">100%</div>
<div class="t" style="left:587px;width:200px;text-align:center;top:427px;font-size:9px;letter-spacing:-0.15px;transform:scaleX(1);transform-origin:100px 0;">100%</div>
<div style="position:absolute;left:450px;top:434px;width:44px;height:15px;border:1px solid #abadb3;border-top-color:#a0a0a0;border-left-color:#cfcfcf;border-right-color:#cfcfcf;border-bottom-color:#dcdcdc;background:#fff"></div>
<div class="t" style="left:454px;top:441.5px;font-size:9px;letter-spacing:-0.15px;transform:scaleX(1);transform-origin:0 0;">100</div>
<div style="position:absolute;left:481px;top:436px;width:11px;height:11px;border:1px solid #c9c9c9;background:linear-gradient(#f2f2f2,#e2e2e2)"></div>
<div style="position:absolute;left:482px;top:441.0px;width:9px;height:1px;background:#c4c4c4"></div>
<svg style="position:absolute;left:0;top:0;overflow:visible" width="1" height="1"><path d="M483.9 439.4 L489.1 439.4 L486.5 436.6 Z M483.9 442.8 L489.1 442.8 L486.5 445.6 Z" fill="#000"/></svg>
<div style="position:absolute;left:614px;top:433px;width:40px;height:16px;border:1px solid #abadb3;border-top-color:#a0a0a0;border-left-color:#cfcfcf;border-right-color:#cfcfcf;border-bottom-color:#dcdcdc;background:#fff"></div>
<div class="t" style="left:618px;top:441.0px;font-size:9px;letter-spacing:-0.15px;transform:scaleX(1);transform-origin:0 0;">100</div>
<div style="position:absolute;left:641px;top:435px;width:11px;height:12px;border:1px solid #c9c9c9;background:linear-gradient(#f2f2f2,#e2e2e2)"></div>
<div style="position:absolute;left:642px;top:440.5px;width:9px;height:1px;background:#c4c4c4"></div>
<svg style="position:absolute;left:0;top:0;overflow:visible" width="1" height="1"><path d="M643.9 438.9 L649.1 438.9 L646.5 436.1 Z M643.9 442.3 L649.1 442.3 L646.5 445.1 Z" fill="#000"/></svg>
<div class="t" style="left:387.2px;width:200px;text-align:center;top:509.5px;font-size:9px;letter-spacing:-0.15px;transform:scaleX(1);transform-origin:100px 0;">1%</div>
<div class="t" style="left:472.1px;width:200px;text-align:center;top:509.5px;font-size:9px;letter-spacing:-0.15px;transform:scaleX(1);transform-origin:100px 0;">200%</div>
<div class="t" style="left:544.2px;width:200px;text-align:center;top:509.8px;font-size:9px;letter-spacing:-0.15px;transform:scaleX(1);transform-origin:100px 0;">50%</div>
<div class="t" style="left:631.6px;width:200px;text-align:center;top:509.8px;font-size:9px;letter-spacing:-0.15px;transform:scaleX(1);transform-origin:100px 0;">150%</div>
<svg style="position:absolute;left:487px;top:434px" width="80" height="80" viewBox="487 434 80 80"><line x1="513.90" y1="498.06" x2="511.10" y2="502.91" stroke="#959595" stroke-width="1"/><line x1="508.27" y1="493.73" x2="504.31" y2="497.69" stroke="#959595" stroke-width="1"/><line x1="503.94" y1="488.10" x2="499.09" y2="490.90" stroke="#959595" stroke-width="1"/><line x1="501.23" y1="481.54" x2="495.82" y2="482.99" stroke="#959595" stroke-width="1"/><line x1="500.30" y1="474.50" x2="494.70" y2="474.50" stroke="#959595" stroke-width="1"/><line x1="501.23" y1="467.46" x2="495.82" y2="466.01" stroke="#959595" stroke-width="1"/><line x1="503.94" y1="460.90" x2="499.09" y2="458.10" stroke="#959595" stroke-width="1"/><line x1="508.27" y1="455.27" x2="504.31" y2="451.31" stroke="#959595" stroke-width="1"/><line x1="513.90" y1="450.94" x2="511.10" y2="446.09" stroke="#959595" stroke-width="1"/><line x1="520.46" y1="448.23" x2="519.01" y2="442.82" stroke="#959595" stroke-width="1"/><line x1="527.50" y1="447.30" x2="527.50" y2="441.70" stroke="#959595" stroke-width="1"/><line x1="534.54" y1="448.23" x2="535.99" y2="442.82" stroke="#959595" stroke-width="1"/><line x1="541.10" y1="450.94" x2="543.90" y2="446.09" stroke="#959595" stroke-width="1"/><line x1="546.73" y1="455.27" x2="550.69" y2="451.31" stroke="#959595" stroke-width="1"/><line x1="551.06" y1="460.90" x2="555.91" y2="458.10" stroke="#959595" stroke-width="1"/><line x1="553.77" y1="467.46" x2="559.18" y2="466.01" stroke="#959595" stroke-width="1"/><line x1="554.70" y1="474.50" x2="560.30" y2="474.50" stroke="#959595" stroke-width="1"/><line x1="553.77" y1="481.54" x2="559.18" y2="482.99" stroke="#959595" stroke-width="1"/><line x1="551.06" y1="488.10" x2="555.91" y2="490.90" stroke="#959595" stroke-width="1"/><line x1="546.73" y1="493.73" x2="550.69" y2="497.69" stroke="#959595" stroke-width="1"/><line x1="541.10" y1="498.06" x2="543.90" y2="502.91" stroke="#959595" stroke-width="1"/><defs><radialGradient id="dg527" cx="0.4" cy="0.35" r="0.7"><stop offset="0" stop-color="#ffffff"/><stop offset="0.55" stop-color="#f7f7f7"/><stop offset="1" stop-color="#e6e6e6"/></radialGradient></defs>
<circle cx="527.5" cy="474.5" r="25.6" fill="url(#dg527)" stroke="#8a8a8a" stroke-width="1.1"/>
<circle cx="527.0" cy="456.5" r="4.4" fill="#d4d4d4" stroke="#a8a8a8" stroke-width="0.9"/>
</svg>
<svg style="position:absolute;left:647px;top:434px" width="80" height="80" viewBox="647 434 80 80"><line x1="673.90" y1="498.06" x2="671.10" y2="502.91" stroke="#959595" stroke-width="1"/><line x1="667.56" y1="494.44" x2="665.58" y2="496.42" stroke="#959595" stroke-width="1"/><line x1="663.94" y1="488.10" x2="659.09" y2="490.90" stroke="#959595" stroke-width="1"/><line x1="660.26" y1="481.80" x2="657.56" y2="482.52" stroke="#959595" stroke-width="1"/><line x1="660.30" y1="474.50" x2="654.70" y2="474.50" stroke="#959595" stroke-width="1"/><line x1="660.26" y1="467.20" x2="657.56" y2="466.48" stroke="#959595" stroke-width="1"/><line x1="663.94" y1="460.90" x2="659.09" y2="458.10" stroke="#959595" stroke-width="1"/><line x1="667.56" y1="454.56" x2="665.58" y2="452.58" stroke="#959595" stroke-width="1"/><line x1="673.90" y1="450.94" x2="671.10" y2="446.09" stroke="#959595" stroke-width="1"/><line x1="680.20" y1="447.26" x2="679.48" y2="444.56" stroke="#959595" stroke-width="1"/><line x1="687.50" y1="447.30" x2="687.50" y2="441.70" stroke="#959595" stroke-width="1"/><line x1="694.80" y1="447.26" x2="695.52" y2="444.56" stroke="#959595" stroke-width="1"/><line x1="701.10" y1="450.94" x2="703.90" y2="446.09" stroke="#959595" stroke-width="1"/><line x1="707.44" y1="454.56" x2="709.42" y2="452.58" stroke="#959595" stroke-width="1"/><line x1="711.06" y1="460.90" x2="715.91" y2="458.10" stroke="#959595" stroke-width="1"/><line x1="714.74" y1="467.20" x2="717.44" y2="466.48" stroke="#959595" stroke-width="1"/><line x1="714.70" y1="474.50" x2="720.30" y2="474.50" stroke="#959595" stroke-width="1"/><line x1="714.74" y1="481.80" x2="717.44" y2="482.52" stroke="#959595" stroke-width="1"/><line x1="711.06" y1="488.10" x2="715.91" y2="490.90" stroke="#959595" stroke-width="1"/><line x1="707.44" y1="494.44" x2="709.42" y2="496.42" stroke="#959595" stroke-width="1"/><line x1="701.10" y1="498.06" x2="703.90" y2="502.91" stroke="#959595" stroke-width="1"/><defs><radialGradient id="dg687" cx="0.4" cy="0.35" r="0.7"><stop offset="0" stop-color="#ffffff"/><stop offset="0.55" stop-color="#f7f7f7"/><stop offset="1" stop-color="#e6e6e6"/></radialGradient></defs>
<circle cx="687.5" cy="474.5" r="25.6" fill="url(#dg687)" stroke="#8a8a8a" stroke-width="1.1"/>
<circle cx="687.0" cy="456.5" r="4.4" fill="#d4d4d4" stroke="#a8a8a8" stroke-width="0.9"/>
</svg>
</body></html>
